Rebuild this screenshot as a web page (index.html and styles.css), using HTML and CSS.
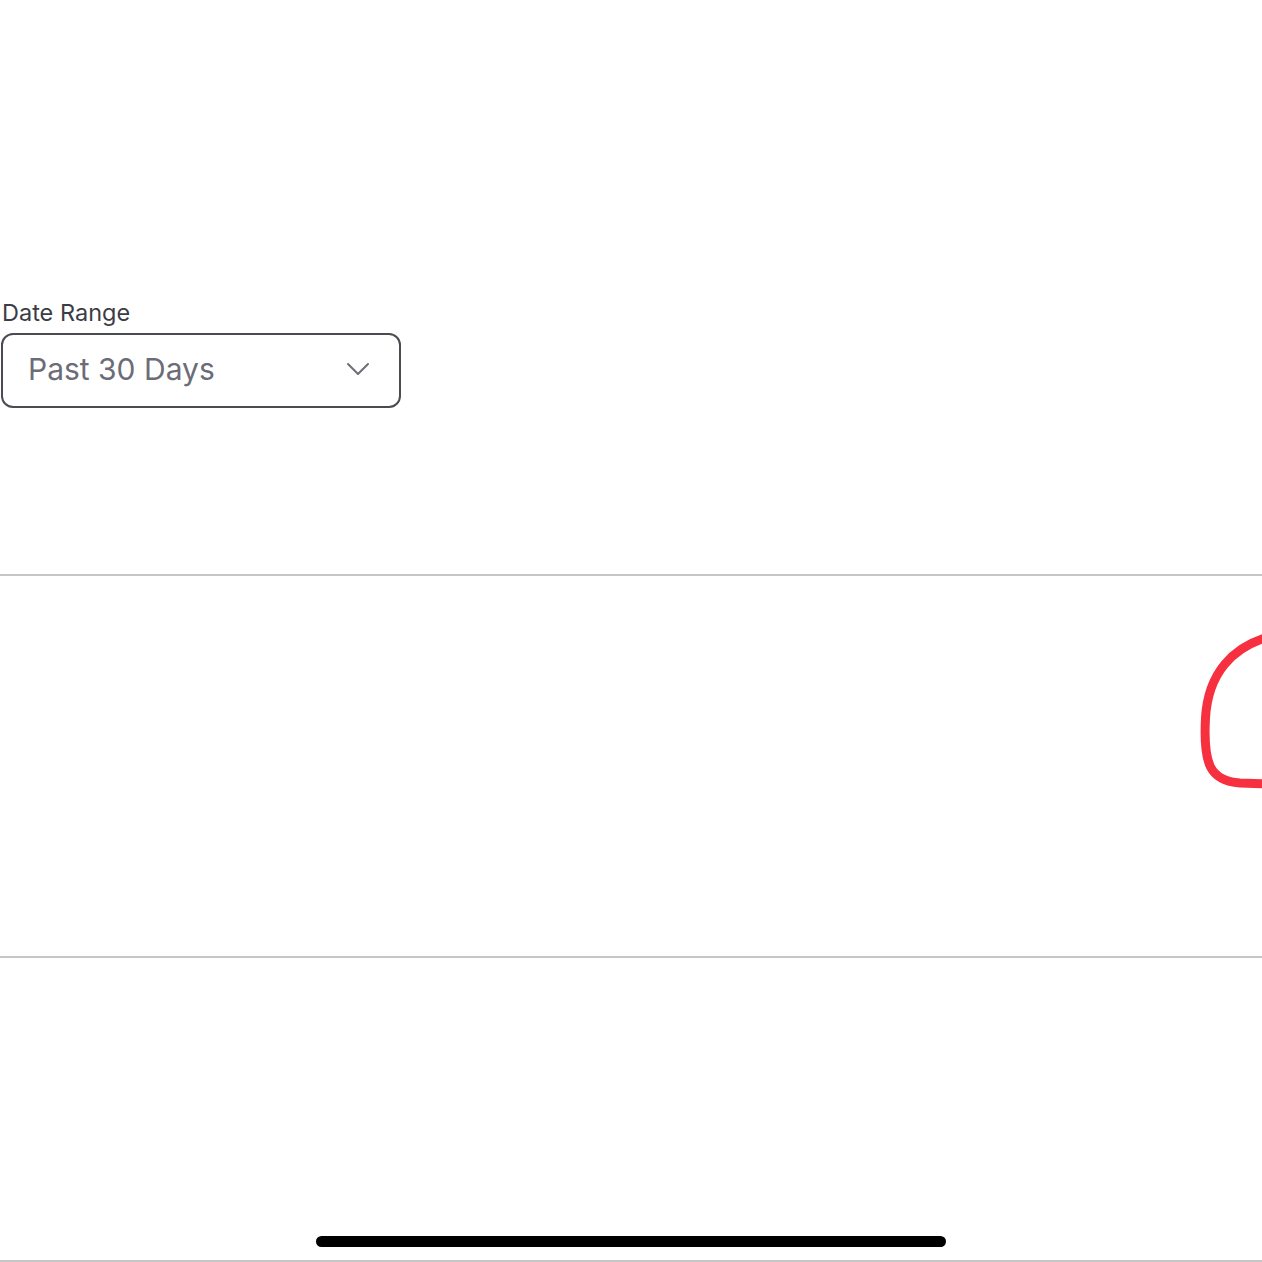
FILE: index.html
```html
<!DOCTYPE html>
<html lang="en">
<head>
    <meta charset="utf-8">
    <title>Date Range</title>
    <meta name="viewport" content="width=device-width, initial-scale=1">
    <link rel="stylesheet" href="styles.css">
</head>
<body>
    <div class="screen">
        <section class="filter-section">
            <label class="field-label" for="range">Date Range</label>
            <div class="select-box" id="range">
                <span class="select-value">Past 30 Days</span>
                <svg class="chevron" width="24" height="14" viewBox="0 0 24 14">
                    <path d="M2 2 L12 12 L22 2" fill="none" stroke="#6e6e76" stroke-width="2" stroke-linecap="round" stroke-linejoin="round"/>
                </svg>
            </div>
        </section>

        <div class="divider"></div>

        <section class="middle-section"></section>

        <div class="divider"></div>

        <footer class="bottom-area">
            <div class="home-indicator"></div>
        </footer>

        <div class="bottom-line"></div>

        <!-- red markup circle drawn over the screenshot -->
        <svg class="markup" width="80" height="170" viewBox="1190 625 80 170">
            <path d="M1272 636 C1232 646 1208 674 1205.5 718 C1203 764 1210 781 1240 783 L1272 784" fill="none" stroke="#f6303f" stroke-width="9" stroke-linecap="round"/>
        </svg>
    </div>
</body>
</html>
```

FILE: styles.css
```css
* {
    margin: 0;
    padding: 0;
    box-sizing: border-box;
}

body {
    font-family: Inter, 'Noto Sans', sans-serif;
    background: #ffffff;
    overflow: hidden;
}

.screen {
    position: relative;
    width: 1262px;
    height: 1262px;
    display: flex;
    flex-direction: column;
}

.filter-section {
    height: 574px;
    padding: 300px 0 0 1px;
    display: flex;
    flex-direction: column;
    gap: 7px;
}

.field-label {
    font-size: 23.5px;
    line-height: 26px;
    color: #3c3c46;
    padding-left: 1px;
}

.select-box {
    width: 400px;
    height: 75px;
    border: 2px solid #4b4b52;
    border-radius: 12px;
    display: flex;
    align-items: center;
    justify-content: space-between;
    padding: 0 29px 3px 25px;
}

.select-value {
    font-size: 30px;
    color: #6c6c78;
}

.chevron {
    display: block;
}

.divider {
    height: 2px;
    background: #c6c6c6;
}

.middle-section {
    height: 380px;
}

.bottom-area {
    flex: 1;
    display: flex;
    justify-content: center;
    align-items: flex-end;
    padding-bottom: 13px;
}

.home-indicator {
    width: 630px;
    height: 11px;
    background: #000000;
    border-radius: 6px;
}

.bottom-line {
    height: 2px;
    background: #c6c6c6;
}

.markup {
    position: absolute;
    left: 1190px;
    top: 625px;
}
```
